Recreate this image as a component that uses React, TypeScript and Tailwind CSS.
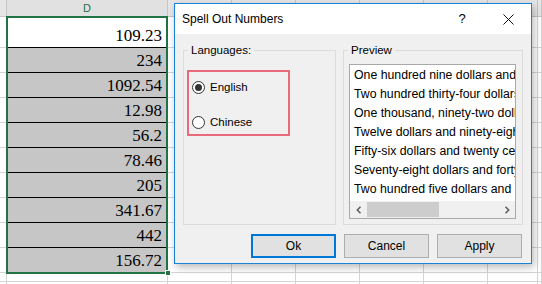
import React from "react";

const values = ["109.23", "234", "1092.54", "12.98", "56.2", "78.46", "205", "341.67", "442", "156.72"];

const preview = [
  "One hundred nine dollars and twenty-three cents",
  "Two hundred thirty-four dollars",
  "One thousand, ninety-two dollars and fifty-four cents",
  "Twelve dollars and ninety-eight cents",
  "Fifty-six dollars and twenty cents",
  "Seventy-eight dollars and forty-six cents",
  "Two hundred five dollars and no cents",
];

// widths of the columns after D (E..K)
const otherCols = ["w-[64px]", "w-[64px]", "w-[64px]", "w-[64px]", "w-[64px]", "w-[50px]", "flex-1"];

function GridRow({ h, children }: { h: string; children?: React.ReactNode }) {
  return (
    <div className={`flex ${h}`}>
      <div className="w-[7px] shrink-0 border-r border-b border-[#d4d4d4]" />
      {children}
      {otherCols.map((w, i) => (
        <div key={i} className={`${w} shrink-0 border-r border-b border-[#d4d4d4]`} />
      ))}
    </div>
  );
}

function Radio({ checked, label }: { checked?: boolean; label: string }) {
  return (
    <div className="flex h-[20px] items-center">
      <div className="ml-[3px] flex h-[13px] w-[13px] items-center justify-center rounded-full border border-[#333] bg-white">
        {checked && <div className="h-[7px] w-[7px] rounded-full bg-[#333]" />}
      </div>
      <span className="ml-[5px] text-[11.5px] leading-[14px] text-black">{label}</span>
    </div>
  );
}

function Chevron({ dir }: { dir: "left" | "right" }) {
  return (
    <svg width="8" height="8" viewBox="0 0 8 8">
      <polyline
        points={dir === "left" ? "5.5,0.8 2.3,4 5.5,7.2" : "2.5,0.8 5.7,4 2.5,7.2"}
        fill="none"
        stroke="#606060"
        strokeWidth="1.6"
      />
    </svg>
  );
}

export default function App() {
  return (
    <div className="relative h-[284px] w-[542px] overflow-hidden bg-white font-['Liberation_Sans',Arial,sans-serif]">
      {/* Sheet */}
      <div className="flex flex-col">
        <div className="flex h-[17px] bg-[#e6e6e6]">
          <div className="w-[7px] shrink-0 border-r border-b border-[#c6c6c6]" />
          <div className="flex w-[161px] shrink-0 items-center justify-center border-r border-b border-[#c6c6c6] bg-[#e1e1e1] text-[11px] text-[#217346]">
            D
          </div>
          {otherCols.map((w, i) => (
            <div key={i} className={`${w} shrink-0 border-r border-b border-[#c6c6c6]`} />
          ))}
        </div>
        {values.map((v, i) => (
          <GridRow key={v} h={i === 0 ? "h-[31px]" : "h-[25px]"}>
            <div
              className={`flex w-[161px] shrink-0 items-end justify-end border-b pr-[5px] pb-[1px] font-['Liberation_Serif',serif] text-[17px] leading-[20px] text-black ${
                i === 0 ? "bg-white border-black" : "bg-[#c6c6c6] border-black"
              } border-r border-r-[#d4d4d4]`}
            >
              {v}
            </div>
          </GridRow>
        ))}
        <GridRow h="h-[9px]">
          <div className="w-[161px] shrink-0 border-r border-b border-[#d4d4d4]" />
        </GridRow>
        <GridRow h="h-[25px]">
          <div className="w-[161px] shrink-0 border-r border-b border-[#d4d4d4]" />
        </GridRow>
      </div>

      {/* selection outline + fill handle */}
      <div className="absolute left-[6px] top-[16px] h-[258px] w-[162px] border-2 border-[#217346]" />
      <div className="absolute left-[165px] top-[270px] h-[6px] w-[6px] border border-white bg-[#217346]" />

      {/* Dialog */}
      <div className="absolute left-[174px] top-[3px] flex h-[261px] w-[358px] flex-col border border-[#1883d7] bg-[#f0f0f0] shadow-[2px_3px_8px_rgba(0,0,0,0.28)]">
        <div className="flex h-[30px] shrink-0 items-center bg-white">
          <span className="pl-[7px] text-[12px] text-black">Spell Out Numbers</span>
          <div className="ml-auto flex h-full">
            <div className="flex w-[46px] items-center justify-center text-[13px] text-black">?</div>
            <div className="flex w-[46px] items-center justify-center">
              <svg width="11" height="11" viewBox="0 0 11 11">
                <path d="M0.5 0.5 L10.5 10.5 M10.5 0.5 L0.5 10.5" stroke="#111" strokeWidth="1" />
              </svg>
            </div>
          </div>
        </div>

        <div className="flex flex-1 flex-col px-[8px] pt-[9px]">
          <div className="flex gap-[7px]">
            <fieldset className="h-[182px] w-[153px] border border-[#dcdcdc]">
              <legend className="ml-[4px] px-[3px] text-[11.5px] leading-[14px] text-black">Languages:</legend>
              <div className="ml-[3px] mt-[13px] flex h-[66px] w-[103px] flex-col gap-[15px] border-2 border-[#e96a7a] pt-[5px]">
                <Radio checked label="English" />
                <Radio label="Chinese" />
              </div>
            </fieldset>

            <fieldset className="h-[182px] w-[180px] border border-[#dcdcdc]">
              <legend className="ml-[4px] px-[3px] text-[11.5px] leading-[14px] text-black">Preview</legend>
              <div className="ml-[5px] mt-[7px] flex h-[155px] w-[167px] flex-col border border-[#a9a9a9] bg-white">
                <div className="h-[136px] overflow-hidden whitespace-nowrap pl-[4px] pt-[1px] text-[12.3px] leading-[19px] text-black">
                  {preview.map((p) => (
                    <div key={p}>{p}</div>
                  ))}
                </div>
                <div className="flex h-[17px] bg-[#f0f0f0]">
                  <div className="flex w-[17px] items-center justify-center">
                    <Chevron dir="left" />
                  </div>
                  <div className="my-[1px] w-[72px] bg-[#cdcdcd]" />
                  <div className="flex-1" />
                  <div className="flex w-[17px] items-center justify-center">
                    <Chevron dir="right" />
                  </div>
                </div>
              </div>
            </fieldset>
          </div>

          <div className="mt-[9px] flex justify-end gap-[8px] pr-[1px]">
            <button className="h-[24px] w-[85px] border-2 border-[#0078d7] bg-[#e1e1e1] text-[12px] text-black">Ok</button>
            <button className="h-[24px] w-[85px] border border-[#adadad] bg-[#e1e1e1] text-[12px] text-black">Cancel</button>
            <button className="h-[24px] w-[85px] border border-[#adadad] bg-[#e1e1e1] text-[12px] text-black">Apply</button>
          </div>
        </div>
      </div>
    </div>
  );
}
